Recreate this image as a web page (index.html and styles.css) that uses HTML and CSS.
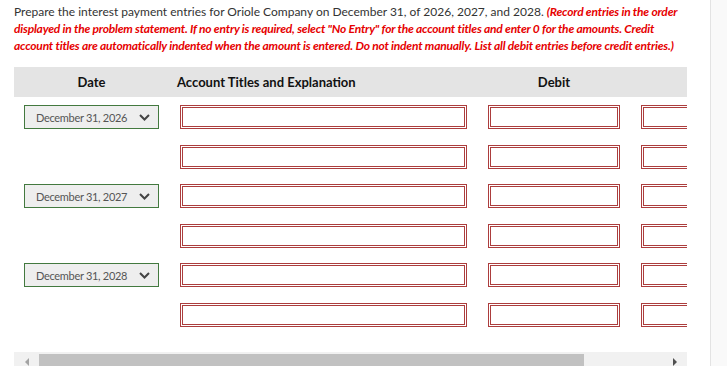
FILE: index.html
```html
<!DOCTYPE html>
<html lang="en">
<head>
  <meta charset="UTF-8">
  <title>Interest payment entries</title>
  <link rel="stylesheet" href="styles.css">
</head>
<body>

  <div class="main">
    <p class="prompt">Prepare the interest payment entries for Oriole Company on December 31, of 2026, 2027, and 2028. <em class="note">(Record entries in the order displayed in the problem statement. If no entry is required, select "No Entry" for the account titles and enter 0 for the amounts. Credit account titles are automatically indented when the amount is entered. Do not indent manually. List all debit entries before credit entries.)</em></p>

    <div class="journal">
      <div class="sheet">
        <div class="row head">
          <div class="h-date">Date</div>
          <div class="h-acct">Account Titles and Explanation</div>
          <div class="h-debit">Debit</div>
          <div></div>
        </div>

        <div class="rows">
          <div class="row">
            <div class="date-pick"><span>December 31, 2026</span><svg width="11" height="7" viewBox="0 0 11 7"><path d="M1 1 L5.5 5.5 L10 1" fill="none" stroke="#444" stroke-width="2"/></svg></div>
            <input class="cell">
            <input class="cell">
            <input class="cell">
          </div>
          <div class="row">
            <div></div>
            <input class="cell">
            <input class="cell">
            <input class="cell">
          </div>
          <div class="row">
            <div class="date-pick"><span>December 31, 2027</span><svg width="11" height="7" viewBox="0 0 11 7"><path d="M1 1 L5.5 5.5 L10 1" fill="none" stroke="#444" stroke-width="2"/></svg></div>
            <input class="cell">
            <input class="cell">
            <input class="cell">
          </div>
          <div class="row">
            <div></div>
            <input class="cell">
            <input class="cell">
            <input class="cell">
          </div>
          <div class="row">
            <div class="date-pick"><span>December 31, 2028</span><svg width="11" height="7" viewBox="0 0 11 7"><path d="M1 1 L5.5 5.5 L10 1" fill="none" stroke="#444" stroke-width="2"/></svg></div>
            <input class="cell">
            <input class="cell">
            <input class="cell">
          </div>
          <div class="row">
            <div></div>
            <input class="cell">
            <input class="cell">
            <input class="cell">
          </div>
        </div>
      </div>

      <div class="hscroll">
        <div class="arrow left"></div>
        <div class="track"><div class="thumb"></div></div>
        <div class="arrow right"></div>
      </div>
    </div>
  </div>

  <div class="side"></div>

</body>
</html>
```

FILE: styles.css
```css
body {
  margin: 0;
  display: flex;
  height: 366px;
  overflow: hidden;
  background: #fff;
  font-family: Lato, "Open Sans", sans-serif;
}
.main {
  width: 673px;
  padding: 3px 23px 0 14px;
}
.side {
  flex: 1;
  background: #f9f9f9;
  border-left: 1px solid #e3e3e3;
}

.prompt {
  margin: 0;
  font-size: 12px;
  line-height: 17px;
  color: #333;
}
.note {
  color: #e60000;
  font-weight: bold;
  font-style: italic;
  letter-spacing: -0.2px;
}

.journal {
  margin-top: 13px;
  width: 673px;
  overflow: hidden;
}
.sheet { width: 780px; }

.row {
  display: grid;
  grid-template-columns: 135px 287px 132px 132px;
  column-gap: 21px;
  padding-left: 10px;
  align-items: center;
}
.head {
  height: 30px;
  background: #e4e4e4;
  font-size: 13px;
  font-weight: bold;
  color: #111;
}
.h-date, .h-debit { text-align: center; }
.h-acct { margin-left: -3px; }

.rows {
  display: flex;
  flex-direction: column;
  gap: 15.6px;
  padding: 8px 0 25px;
}

.date-pick {
  height: 24px;
  box-sizing: border-box;
  border: 1px solid #43793f;
  background: #eeeeee;
  display: flex;
  align-items: center;
  justify-content: space-between;
  padding: 0 8px 0 11px;
  font-size: 11px;
  letter-spacing: -0.3px;
  color: #555;
}

.cell {
  height: 24px;
  box-sizing: border-box;
  border: 3px double #ac3d3d;
  background: #fff;
  padding: 0;
  margin: 0;
  width: 100%;
}

.hscroll {
  display: flex;
  height: 17px;
  background: #f1f1f1;
}
.hscroll .track {
  flex: 1;
  padding-top: 2px;
}
.thumb {
  width: 545px;
  height: 13px;
  background: #c1c1c1;
}
.arrow {
  width: 25px;
  display: flex;
  align-items: center;
  justify-content: center;
}
.arrow.left::before {
  content: "";
  border-style: solid;
  border-width: 4px 4px 4px 0;
  border-color: transparent #a3a3a3 transparent transparent;
  margin-top: 4px;
}
.arrow.right::before {
  content: "";
  border-style: solid;
  border-width: 4px 0 4px 4px;
  border-color: transparent transparent transparent #505050;
  margin-top: 4px;
}
```
